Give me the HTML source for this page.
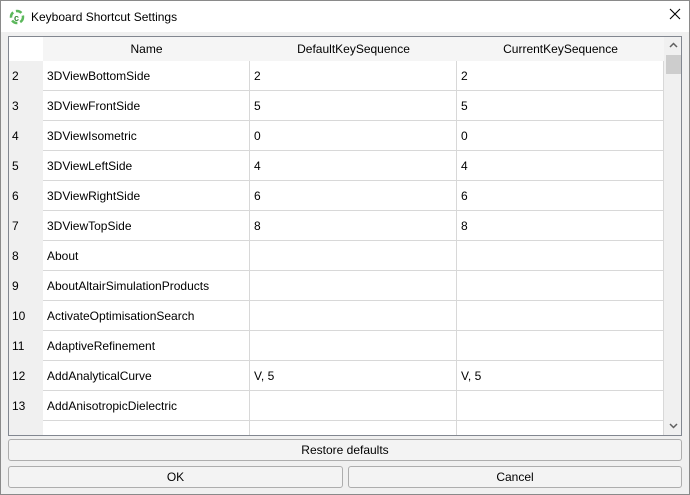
<!DOCTYPE html>
<html><head><meta charset="utf-8"><style>
*{margin:0;padding:0;box-sizing:border-box}
body{width:690px;height:495px;overflow:hidden;background:#f0f0f0;font-family:"Liberation Sans",sans-serif;font-size:12px;color:#000;position:relative}
.win{position:absolute;left:0;top:0;width:690px;height:495px;border:1px solid #8a8a8a;background:#f0f0f0}
.title{position:absolute;left:0;top:0;width:688px;height:31px;background:#fff}
.title .t{position:absolute;left:30px;top:9px;font-size:12px}
.title .x{position:absolute;left:667px;top:6px}
.tbl{position:absolute;left:7px;top:35px;width:674px;height:400px;border:1px solid #828790;background:#fff;overflow:hidden}
.corner{position:absolute;left:0;top:0;width:34px;height:24px;background:#fff}
.vh{position:absolute;left:0;top:24px;width:34px;height:380px;background:#f0f0f0}
.hh{position:absolute;left:34px;top:0;width:621px;height:24px;background:#f5f5f5}
.hh div{position:absolute;top:5px;text-align:center;width:207px}
.row{position:absolute;left:0;height:30px;width:655px}
.row .n{position:absolute;left:3px;top:8px}
.row .c{position:absolute;top:0;height:30px;width:207px;border-right:1px solid #d8d8d8;border-bottom:1px solid #d8d8d8;background:#fff;padding:8px 0 0 4px}
.sb{position:absolute;left:655px;top:0;width:18px;height:398px;background:#f0f0f0}
.thumb{position:absolute;left:2px;top:18px;width:15px;height:19px;background:#cdcdcd}
.btn{position:absolute;height:22px;border:1px solid #adadad;border-radius:3px;background:#f3f3f3;text-align:center;line-height:20px}
</style></head><body>
<div class="win">
<div class="title">
<svg style="position:absolute;left:8px;top:8px" width="16" height="16" viewBox="0 0 16 16"><circle cx="8" cy="8" r="6" fill="none" stroke="#5cb85c" stroke-width="2.5" stroke-dasharray="6 3"/><text x="5" y="12" font-size="9" font-family="Liberation Sans" font-weight="bold" fill="#3a8a3a">c</text></svg>
<div class="t">Keyboard Shortcut Settings</div>
<svg class="x" width="14" height="14" viewBox="0 0 14 14"><path d="M2 2L12 12M12 2L2 12" stroke="#000" stroke-width="1.1"/></svg>
</div>
<div class="tbl">
<div class="corner"></div><div class="vh"></div>
<div class="hh"><div style="left:0">Name</div><div style="left:207px">DefaultKeySequence</div><div style="left:414px">CurrentKeySequence</div></div>
<div class="row" style="top:24px"><span class="n">2</span><div class="c" style="left:34px">3DViewBottomSide</div><div class="c" style="left:241px">2</div><div class="c" style="left:448px">2</div></div>
<div class="row" style="top:54px"><span class="n">3</span><div class="c" style="left:34px">3DViewFrontSide</div><div class="c" style="left:241px">5</div><div class="c" style="left:448px">5</div></div>
<div class="row" style="top:84px"><span class="n">4</span><div class="c" style="left:34px">3DViewIsometric</div><div class="c" style="left:241px">0</div><div class="c" style="left:448px">0</div></div>
<div class="row" style="top:114px"><span class="n">5</span><div class="c" style="left:34px">3DViewLeftSide</div><div class="c" style="left:241px">4</div><div class="c" style="left:448px">4</div></div>
<div class="row" style="top:144px"><span class="n">6</span><div class="c" style="left:34px">3DViewRightSide</div><div class="c" style="left:241px">6</div><div class="c" style="left:448px">6</div></div>
<div class="row" style="top:174px"><span class="n">7</span><div class="c" style="left:34px">3DViewTopSide</div><div class="c" style="left:241px">8</div><div class="c" style="left:448px">8</div></div>
<div class="row" style="top:204px"><span class="n">8</span><div class="c" style="left:34px">About</div><div class="c" style="left:241px"></div><div class="c" style="left:448px"></div></div>
<div class="row" style="top:234px"><span class="n">9</span><div class="c" style="left:34px">AboutAltairSimulationProducts</div><div class="c" style="left:241px"></div><div class="c" style="left:448px"></div></div>
<div class="row" style="top:264px"><span class="n">10</span><div class="c" style="left:34px">ActivateOptimisationSearch</div><div class="c" style="left:241px"></div><div class="c" style="left:448px"></div></div>
<div class="row" style="top:294px"><span class="n">11</span><div class="c" style="left:34px">AdaptiveRefinement</div><div class="c" style="left:241px"></div><div class="c" style="left:448px"></div></div>
<div class="row" style="top:324px"><span class="n">12</span><div class="c" style="left:34px">AddAnalyticalCurve</div><div class="c" style="left:241px">V, 5</div><div class="c" style="left:448px">V, 5</div></div>
<div class="row" style="top:354px"><span class="n">13</span><div class="c" style="left:34px">AddAnisotropicDielectric</div><div class="c" style="left:241px"></div><div class="c" style="left:448px"></div></div>
<div class="row" style="top:384px"><span class="n"></span><div class="c" style="left:34px"></div><div class="c" style="left:241px"></div><div class="c" style="left:448px"></div></div>
<div class="sb"><svg style="position:absolute;left:5px;top:5px" width="9" height="6" viewBox="0 0 9 6"><path d="M1 5L4.5 1.5L8 5" stroke="#606060" stroke-width="1.5" fill="none"/></svg><div class="thumb"></div><svg style="position:absolute;left:5px;top:386px" width="9" height="6" viewBox="0 0 9 6"><path d="M1 1L4.5 4.5L8 1" stroke="#606060" stroke-width="1.5" fill="none"/></svg></div>
</div>
<div class="btn" style="left:7px;top:438px;width:674px">Restore defaults</div>
<div class="btn" style="left:7px;top:465px;width:335px">OK</div>
<div class="btn" style="left:347px;top:465px;width:334px">Cancel</div>
</div>
</body></html>
